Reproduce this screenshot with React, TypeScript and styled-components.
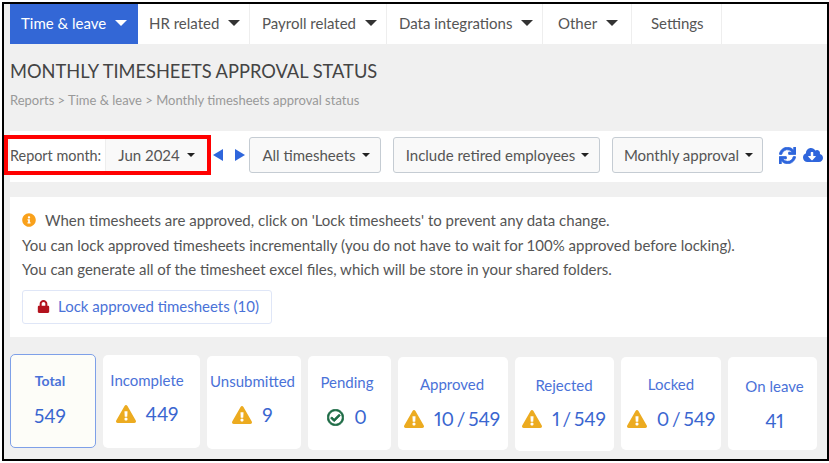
import React from 'react';
import styled, { createGlobalStyle } from 'styled-components';
import {
  FaSync,
  FaCloudDownloadAlt,
  FaInfoCircle,
  FaLock,
  FaExclamationTriangle,
  FaRegCheckCircle,
} from 'react-icons/fa';

const GlobalStyle = createGlobalStyle`
  html, body {
    margin: 0;
    padding: 0;
    background: #fff;
    font-family: 'Lato', 'Liberation Sans', sans-serif;
  }
  * { box-sizing: border-box; }
`;

const Frame = styled.div`
  width: 827px;
  height: 459px;
  margin: 2px 0 0 2px;
  border: 2px solid #000;
  background: #f0f0f0;
  overflow: hidden;
`;

const Nav = styled.nav`
  display: flex;
  height: 40px;
  margin-left: 6px;
  background: #fff;
`;

const NavTab = styled.div<{ $active?: boolean; $width: number; $pad: number }>`
  display: flex;
  align-items: center;
  gap: 9px;
  width: ${({ $width }) => $width}px;
  padding: 0 0 2px ${({ $pad }) => $pad}px;
  font-size: 15px;
  color: ${({ $active }) => ($active ? '#fff' : '#555')};
  background: ${({ $active }) => ($active ? '#3367d6' : '#fff')};
  border-right: ${({ $active }) => ($active ? 'none' : '1px solid #eee')};
`;

const NavCaret = styled.span<{ $light?: boolean }>`
  width: 0;
  height: 0;
  border-left: 6px solid transparent;
  border-right: 6px solid transparent;
  border-top: 6px solid ${({ $light }) => ($light ? '#fff' : '#333')};
`;

const Header = styled.header`
  height: 87px;
  padding: 16px 0 0 6px;
`;

const Title = styled.h1`
  margin: 0;
  font-size: 18.25px;
  line-height: 22px;
  font-weight: 400;
  color: #444;
`;

const Breadcrumb = styled.div`
  margin-top: 10px;
  font-size: 13px;
  line-height: 16px;
  color: #999;
`;

const Toolbar = styled.div`
  position: relative;
  display: flex;
  align-items: center;
  height: 51px;
  margin-left: 6px;
  padding-bottom: 3px;
  background: #fff;
`;

const MonthLabel = styled.span`
  font-size: 14.4px;
  color: #555;
  width: 95px;
`;

const DropButton = styled.div<{ $width: number; $flat?: boolean; $gapLeft?: number }>`
  display: flex;
  align-items: center;
  justify-content: center;
  gap: ${({ $flat }) => ($flat ? 7 : 6)}px;
  width: ${({ $width }) => $width}px;
  height: 36px;
  margin-left: ${({ $gapLeft }) => $gapLeft ?? 0}px;
  padding-left: ${({ $flat }) => ($flat ? 0 : 2)}px;
  font-size: 15px;
  color: #555;
  background: #f9f9f9;
  border: 1px solid ${({ $flat }) => ($flat ? '#eee' : '#c5ccd3')};
  border-radius: 3px;
`;

const SmallCaret = styled.span`
  width: 0;
  height: 0;
  border-left: 4px solid transparent;
  border-right: 4px solid transparent;
  border-top: 4px solid #222;
`;

const StepArrow = styled.span<{ $dir: 'left' | 'right' }>`
  width: 0;
  height: 0;
  margin-left: ${({ $dir }) => ($dir === 'left' ? 5 : 12)}px;
  border-top: 6px solid transparent;
  border-bottom: 6px solid transparent;
  ${({ $dir }) =>
    $dir === 'left' ? 'border-right: 10px solid #2f66dc;' : 'border-left: 10px solid #2f66dc;'}
`;

const ToolIcons = styled.div`
  display: flex;
  align-items: center;
  gap: 7px;
  margin-left: 16px;
  color: #2f66dc;
`;

const RefreshIcon = styled(FaSync)`
  font-size: 17px;
  stroke: currentColor;
  stroke-width: 24px;
`;

const Highlight = styled.div`
  position: absolute;
  left: -6px;
  top: 4px;
  width: 207px;
  height: 40px;
  border: 4px solid #f00;
`;

const Notice = styled.section`
  height: 140px;
  margin: 15px 0 0 6px;
  padding: 11px 12px 0;
  background: #fff;
  font-size: 15px;
  color: #555;
`;

const NoticeLine = styled.div<{ $height: number }>`
  display: flex;
  align-items: center;
  height: ${({ $height }) => $height}px;
  white-space: nowrap;
`;

const InfoIcon = styled(FaInfoCircle)`
  margin-right: 9px;
  color: #f9a11b;
  font-size: 14px;
`;

const LockButton = styled.div`
  display: inline-flex;
  align-items: center;
  gap: 8px;
  height: 34px;
  width: 250px;
  margin-top: 10px;
  padding: 0 0 2px 14px;
  font-size: 15px;
  color: #4a72d8;
  background: #fff;
  border: 1px solid #dfe6f7;
  border-radius: 3px;
  white-space: nowrap;
`;

const LockIcon = styled(FaLock)`
  color: #b3121d;
  font-size: 13px;
`;

const Stats = styled.div`
  display: flex;
  align-items: flex-start;
  gap: 7px;
  padding: 17px 0 0 6px;
`;

const StatCard = styled.div<{
  $width: number;
  $height: number;
  $drop: number;
  $pad: number;
  $offset: number;
  $active?: boolean;
}>`
  display: flex;
  flex-direction: column;
  align-items: center;
  width: ${({ $width }) => $width}px;
  height: ${({ $height }) => $height}px;
  margin-top: ${({ $drop }) => $drop}px;
  padding-top: ${({ $pad }) => $pad}px;
  padding-left: ${({ $offset }) => Math.max($offset, 0)}px;
  padding-right: ${({ $offset }) => Math.max(-$offset, 0)}px;
  background: ${({ $active }) => ($active ? '#fdfdf8' : '#fff')};
  border: ${({ $active }) => ($active ? '1px solid #7ea0e8' : 'none')};
  border-radius: 5px;
`;

const StatLabel = styled.div<{ $active?: boolean }>`
  font-size: ${({ $active }) => ($active ? 14 : 15)}px;
  line-height: 18px;
  font-weight: ${({ $active }) => ($active ? 700 : 400)};
  color: #4a72d8;
  white-space: nowrap;
`;

const StatValue = styled.div<{ $gap: number }>`
  display: flex;
  align-items: center;
  gap: 10px;
  margin-top: ${({ $gap }) => $gap}px;
  font-size: 19px;
  line-height: 24px;
  font-variant-numeric: proportional-nums;
  word-spacing: -2px;
  color: #3a66d0;
`;

const WarnIcon = styled(FaExclamationTriangle)`
  color: #ecab20;
  font-size: 20px;
`;

const OkIcon = styled(FaRegCheckCircle)`
  color: #1d6b45;
  font-size: 17px;
  stroke: currentColor;
  stroke-width: 24px;
`;

const tabs = [
  { label: 'Time & leave', width: 128, pad: 11, active: true, caret: true },
  { label: 'HR related', width: 112, pad: 11, caret: true },
  { label: 'Payroll related', width: 137, pad: 12, caret: true },
  { label: 'Data integrations', width: 156, pad: 12, caret: true },
  { label: 'Other', width: 89, pad: 15, caret: true },
  { label: 'Settings', width: 90, pad: 19 },
];

const stats = [
  { label: 'Total', value: '549', width: 86, height: 94, drop: 0, pad: 17, gap: 14, offset: -6, active: true },
  { label: 'Incomplete', value: '449', width: 97, height: 93, drop: 1, pad: 16, gap: 13, offset: -9, icon: 'warn' },
  { label: 'Unsubmitted', value: '9', width: 94, height: 93, drop: 2, pad: 16, gap: 13, offset: -3, icon: 'warn' },
  { label: 'Pending', value: '0', width: 83, height: 94, drop: 2, pad: 17, gap: 14, offset: -5, icon: 'ok' },
  { label: 'Approved', value: '10 / 549', width: 110, height: 93, drop: 3, pad: 18, gap: 14, offset: -2, icon: 'warn' },
  { label: 'Rejected', value: '1 / 549', width: 99, height: 94, drop: 3, pad: 19, gap: 13, offset: -1, icon: 'warn' },
  { label: 'Locked', value: '0 / 549', width: 100, height: 93, drop: 3, pad: 18, gap: 14, offset: 0, icon: 'warn' },
  { label: 'On leave', value: '41', width: 89, height: 93, drop: 3, pad: 20, gap: 14, offset: 4 },
];

const App: React.FC = () => (
  <>
    <GlobalStyle />
    <Frame>
      <Nav>
        {tabs.map((tab) => (
          <NavTab key={tab.label} $active={tab.active} $width={tab.width} $pad={tab.pad}>
            {tab.label}
            {tab.caret && <NavCaret $light={tab.active} />}
          </NavTab>
        ))}
      </Nav>

      <Header>
        <Title>MONTHLY TIMESHEETS APPROVAL STATUS</Title>
        <Breadcrumb>Reports &gt; Time &amp; leave &gt; Monthly timesheets approval status</Breadcrumb>
      </Header>

      <Toolbar>
        <MonthLabel>Report month:</MonthLabel>
        <DropButton $width={103} $flat>
          Jun 2024 <SmallCaret />
        </DropButton>
        <StepArrow $dir="left" />
        <StepArrow $dir="right" />
        <DropButton $width={132} $gapLeft={4}>
          All timesheets <SmallCaret />
        </DropButton>
        <DropButton $width={207} $gapLeft={12}>
          Include retired employees <SmallCaret />
        </DropButton>
        <DropButton $width={151} $gapLeft={12}>
          Monthly approval <SmallCaret />
        </DropButton>
        <ToolIcons>
          <RefreshIcon />
          <FaCloudDownloadAlt size={20} />
        </ToolIcons>
        <Highlight />
      </Toolbar>

      <Notice>
        <NoticeLine $height={24}>
          <InfoIcon />
          When timesheets are approved, click on 'Lock timesheets' to prevent any data change.
        </NoticeLine>
        <NoticeLine $height={26}>
          You can lock approved timesheets incrementally (you do not have to wait for 100% approved before locking).
        </NoticeLine>
        <NoticeLine $height={22}>
          You can generate all of the timesheet excel files, which will be store in your shared folders.
        </NoticeLine>
        <LockButton>
          <LockIcon />
          Lock approved timesheets (10)
        </LockButton>
      </Notice>

      <Stats>
        {stats.map((stat) => (
          <StatCard
            key={stat.label}
            $width={stat.width}
            $height={stat.height}
            $drop={stat.drop}
            $pad={stat.pad}
            $offset={stat.offset}
            $active={stat.active}
          >
            <StatLabel $active={stat.active}>{stat.label}</StatLabel>
            <StatValue $gap={stat.gap}>
              {stat.icon === 'warn' && <WarnIcon />}
              {stat.icon === 'ok' && <OkIcon />}
              {stat.value}
            </StatValue>
          </StatCard>
        ))}
      </Stats>
    </Frame>
  </>
);

export default App;
